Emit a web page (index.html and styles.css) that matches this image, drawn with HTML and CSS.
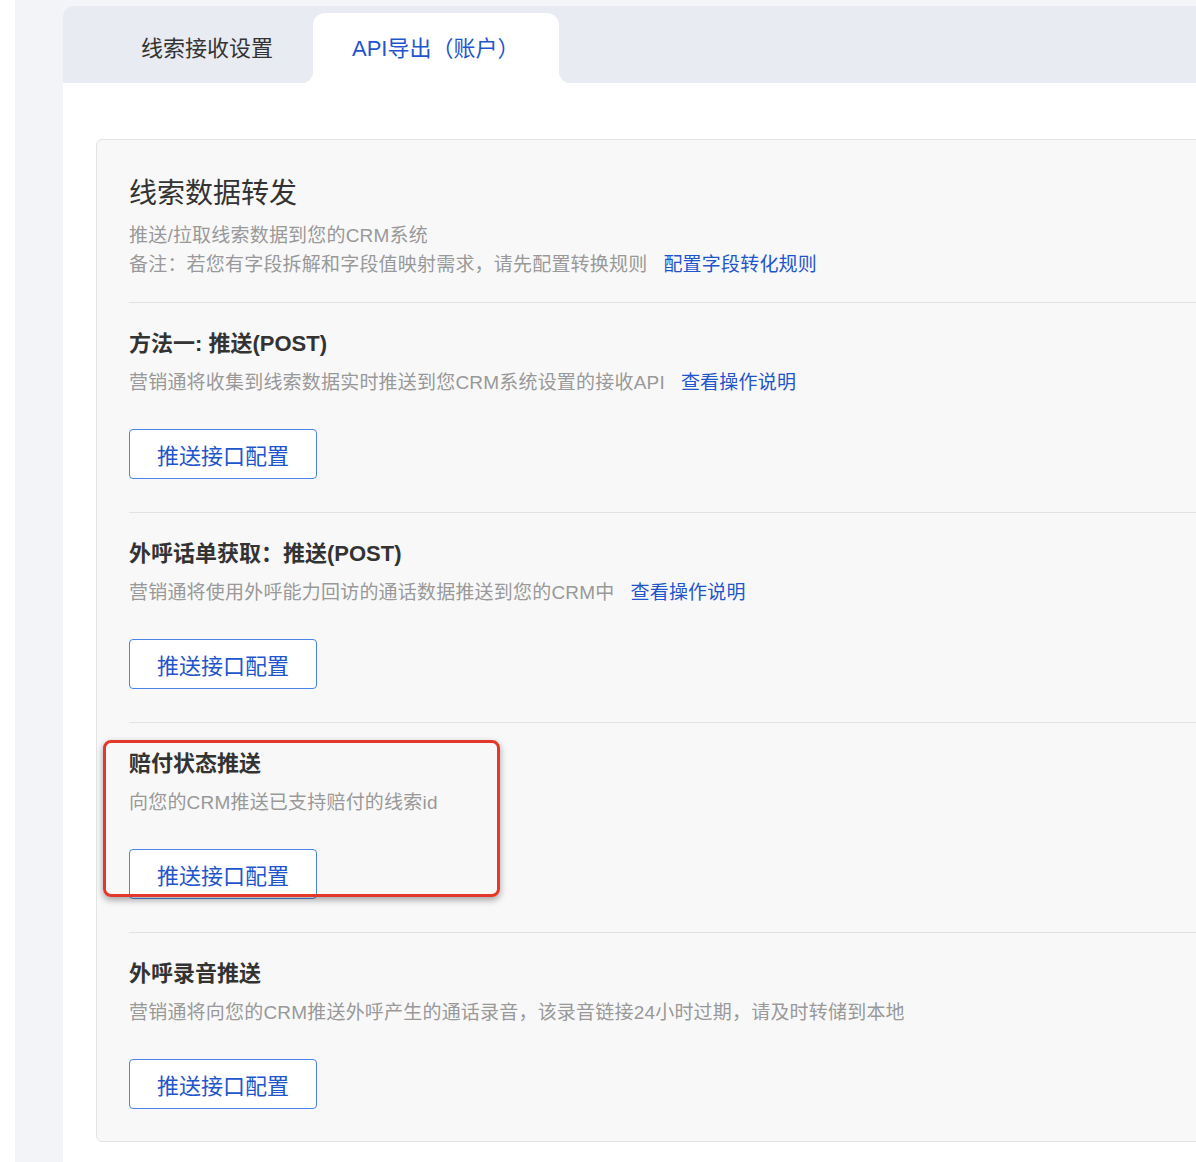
FILE: index.html
```html
<!DOCTYPE html>
<html lang="zh-CN">
<head>
<meta charset="utf-8">
<title>API导出（账户）</title>
<link rel="stylesheet" href="styles.css">
</head>
<body>
<div class="app">
  <div class="edge"></div>
  <div class="side"></div>
  <div class="main">
    <div class="tabs">
      <div class="tab">线索接收设置</div>
      <div class="tab active">API导出（账户）</div>
    </div>
    <div class="panel">
      <div class="card">
        <div class="head">
          <h1 class="title">线索数据转发</h1>
          <p class="desc">推送/拉取线索数据到您的CRM系统</p>
          <p class="desc">备注：若您有字段拆解和字段值映射需求，请先配置转换规则<a class="link">配置字段转化规则</a></p>
        </div>
        <div class="section">
          <h2 class="stitle">方法一: 推送(POST)</h2>
          <p class="desc">营销通将收集到线索数据实时推送到您CRM系统设置的接收API<a class="link">查看操作说明</a></p>
          <button class="btn">推送接口配置</button>
        </div>
        <div class="section">
          <h2 class="stitle">外呼话单获取：推送(POST)</h2>
          <p class="desc">营销通将使用外呼能力回访的通话数据推送到您的CRM中<a class="link">查看操作说明</a></p>
          <button class="btn">推送接口配置</button>
        </div>
        <div class="section marked">
          <h2 class="stitle">赔付状态推送</h2>
          <p class="desc">向您的CRM推送已支持赔付的线索id</p>
          <button class="btn">推送接口配置</button>
          <div class="highlight"></div>
        </div>
        <div class="section">
          <h2 class="stitle">外呼录音推送</h2>
          <p class="desc">营销通将向您的CRM推送外呼产生的通话录音，该录音链接24小时过期，请及时转储到本地</p>
          <button class="btn">推送接口配置</button>
        </div>
      </div>
    </div>
  </div>
</div>
</body>
</html>
```

FILE: styles.css
```css
html, body {
  margin: 0;
  padding: 0;
  background: #f4f5f9;
  overflow: hidden;
  font-family: "Liberation Sans", "Noto Sans CJK SC", "Noto Sans", sans-serif;
}

.app {
  display: flex;
  width: 1196px;
  height: 1162px;
}

.edge {
  width: 15px;
  flex: none;
  background: #ffffff;
}

.side {
  width: 48px;
  flex: none;
  background: #f3f4f8;
}

.main {
  flex: none;
  width: 1180px;
  padding-top: 6px;
  display: flex;
  flex-direction: column;
}

.tabs {
  display: flex;
  align-items: flex-end;
  height: 77px;
  background: #e9ebf2;
  border-top-left-radius: 10px;
}

.tab {
  height: 70px;
  display: flex;
  align-items: center;
  font-size: 22px;
  color: #333333;
  box-sizing: border-box;
  padding-bottom: 4px;
  position: relative;
}

.tab:first-child {
  width: 250px;
  padding-left: 78px;
}

.tab.active {
  width: 246px;
  padding-left: 39px;
  background: #ffffff;
  color: #1f55cc;
  border-radius: 12px 12px 0 0;
}

.tab.active::before,
.tab.active::after {
  content: "";
  position: absolute;
  bottom: 0;
  width: 12px;
  height: 12px;
}

.tab.active::before {
  left: -12px;
  background: radial-gradient(circle at 0 0, transparent 12px, #ffffff 12.5px);
}

.tab.active::after {
  right: -12px;
  background: radial-gradient(circle at 100% 0, transparent 12px, #ffffff 12.5px);
}

.panel {
  flex: 1;
  background: #ffffff;
  padding: 56px 0 0 33px;
}

.card {
  width: 1200px;
  box-sizing: border-box;
  background: #f8f8f8;
  border: 1px solid #e4e4e4;
  border-radius: 6px;
  padding: 34px 0 32px 32px;
}

.head {
  padding-bottom: 23px;
}

.title {
  margin: 0 0 7px;
  font-size: 28px;
  line-height: 40px;
  font-weight: 400;
  color: #333333;
}

.desc {
  margin: 0;
  font-size: 19px;
  letter-spacing: 0.2px;
  line-height: 29px;
  color: #999999;
}

.link {
  margin-left: 16px;
  color: #1f55cc;
  cursor: pointer;
}

.section {
  border-top: 1px solid #e2e2e2;
  padding: 26px 0 33px;
  position: relative;
}

.section:last-child {
  padding-bottom: 0;
}

.stitle {
  margin: 0 0 9px;
  font-size: 22px;
  line-height: 30px;
  font-weight: 700;
  color: #333333;
}

.btn {
  display: block;
  margin-top: 32px;
  width: 188px;
  height: 50px;
  box-sizing: border-box;
  background: #ffffff;
  border: 1px solid #4a84e6;
  border-radius: 4px;
  font-family: inherit;
  font-size: 22px;
  color: #1f55cc;
  padding: 0;
  cursor: pointer;
}

.highlight {
  position: absolute;
  left: -26px;
  top: 17px;
  width: 397px;
  height: 157px;
  box-sizing: border-box;
  border: 3px solid #e3382c;
  border-radius: 8px;
  box-shadow: 0 3px 7px rgba(0, 0, 0, 0.35);
  pointer-events: none;
}
```
